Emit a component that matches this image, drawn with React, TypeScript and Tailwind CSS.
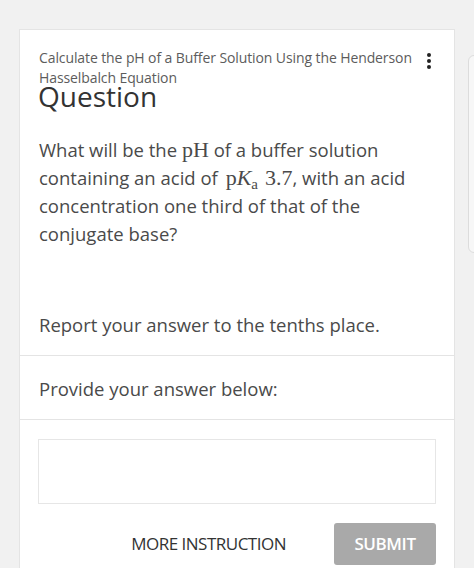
export default function App() {
  const sans = { fontFamily: '"Open Sans", "Noto Sans", sans-serif' }
  const serif = { fontFamily: '"Liberation Serif", "DejaVu Serif", serif' }
  return (
    <div className="relative h-[568px] w-[474px] overflow-hidden bg-[#f1f1f1]" style={sans}>
      {/* next card peeking in from the right */}
      <div className="absolute left-[468px] top-[55px] h-[198px] w-[20px] rounded-l-[6px] border border-[#dcdcdc] bg-[#f7f7f7]" />

      <div className="ml-[19px] mt-[29px] h-[560px] w-[436px] border border-[#e4e4e4] bg-white">
        {/* header */}
        <div className="flex px-[18px] pt-[18px]">
          <div className="flex-1 pl-px text-[14px] leading-[20px] tracking-[-0.1px] text-[#5c5c5c]">
            Calculate the pH of a Buffer Solution Using the Henderson Hasselbalch Equation
          </div>
          <div className="flex w-[14px] flex-col items-center gap-[2px] pt-[5px]">
            <span className="h-[4px] w-[4px] rounded-full bg-[#222]" />
            <span className="h-[4px] w-[4px] rounded-full bg-[#222]" />
            <span className="h-[4px] w-[4px] rounded-full bg-[#222]" />
          </div>
        </div>
        <h1 className="px-[18px] text-[28px] leading-[16px] font-normal text-[#333]">Question</h1>

        {/* question body */}
        <div className="px-[18px] pt-[32px] pb-[16px] text-[18.5px] leading-[28px] text-[#4a4a4a]">
          <p className="pl-px">
            What will be the{' '}
            <span className="text-[22px]" style={serif}>pH</span>{' '}
            of a buffer solution containing an acid of{' '}
            <span className="pl-[3px] text-[22px]" style={serif}>
              p<i>K</i>
              <sub className="text-[15px]">a</sub>
              <span className="ml-[7px]">3.7</span>
            </span>
            , with an acid concentration one third of that of the conjugate base?
          </p>
          <p className="mt-[63px] pl-px">Report your answer to the tenths place.</p>
        </div>

        <div className="border-t border-[#e4e4e4] px-[18px] pt-[19px] pb-[16px] text-[18.5px] leading-[28px] text-[#4a4a4a]">
          <p className="pl-px">Provide your answer below:</p>
        </div>

        <div className="border-t border-[#e4e4e4] px-[18px] pt-[19px]">
          <div className="h-[65px] w-full border border-[#e6e6e6] bg-white" />
          <div className="mt-[19px] flex items-center justify-end">
            <button className="px-[24px] text-[17px] tracking-[-0.5px] text-[#333]">MORE INSTRUCTION</button>
            <button className="ml-[24px] h-[42px] w-[102px] rounded-[3px] bg-[#a9a9a9] text-[17px] font-semibold tracking-[-0.4px] text-white">
              SUBMIT
            </button>
          </div>
        </div>
      </div>
    </div>
  )
}
